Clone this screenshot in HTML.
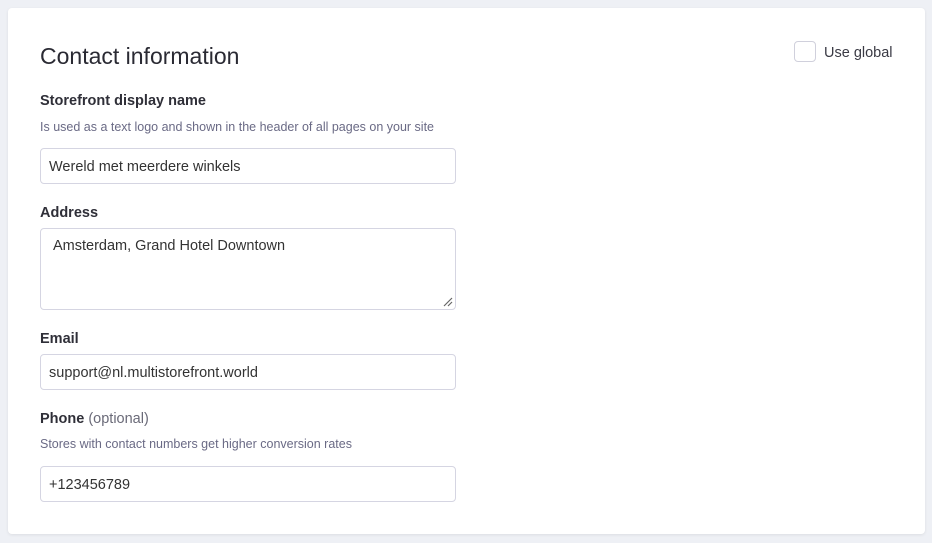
<!DOCTYPE html>
<html><head><style>
*{box-sizing:border-box;margin:0;padding:0}
body{width:932px;height:543px;background:#eef0f5;font-family:"Liberation Sans",sans-serif;color:#333;position:relative;overflow:hidden}
.card{position:absolute;left:8px;top:8px;width:917px;height:526px;background:#fff;border-radius:4px;box-shadow:0 1px 3px rgba(0,0,0,.08)}
.a{position:absolute;white-space:nowrap}
h1{position:absolute;left:32px;top:35px;font-size:23px;font-weight:400;color:#2a2a33}
.l{font-size:14.5px;font-weight:700;color:#2f2f38}
.h{font-size:12.5px;color:#6a6a85}
.in{position:absolute;left:32px;width:416px;border:1px solid #d5d5e2;border-radius:4px;font-size:14.5px;color:#333;padding-left:8px}
</style></head><body>
<div class="card">
<h1>Contact information</h1>
<div class="a" style="left:786px;top:33px;width:22px;height:21px;border:1px solid #d0d0dc;border-radius:4px"></div>
<div class="a" style="left:816px;top:37px;font-size:14.5px;color:#3a3a44">Use global</div>
<div class="a l" style="left:32px;top:85px">Storefront display name</div>
<div class="a h" style="left:32px;top:112px">Is used as a text logo and shown in the header of all pages on your site</div>
<div class="in" style="top:140px;height:36px;line-height:36px">Wereld met meerdere winkels</div>
<div class="a l" style="left:32px;top:197px">Address</div>
<div class="in" style="top:220px;height:82px;padding:9px 12px">Amsterdam, Grand Hotel Downtown
<svg style="position:absolute;right:2px;bottom:2px" width="10" height="10"><path d="M1 9L9 1M5 9L9 5" stroke="#666" stroke-width="1.2"/></svg></div>
<div class="a l" style="left:32px;top:323px">Email</div>
<div class="in" style="top:346px;height:36px;line-height:36px">support@nl.multistorefront.world</div>
<div class="a l" style="left:32px;top:403px">Phone <span style="font-weight:400;color:#6a6a78">(optional)</span></div>
<div class="a h" style="left:32px;top:429px">Stores with contact numbers get higher conversion rates</div>
<div class="in" style="top:458px;height:36px;line-height:36px">+123456789</div>
</div>
</body></html>
